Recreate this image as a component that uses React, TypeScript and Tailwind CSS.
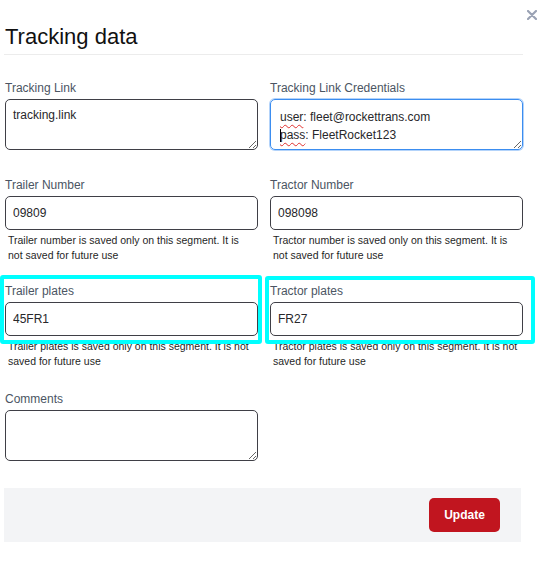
import React from 'react';

const labelCls = 'block text-[12px] leading-[16px] text-[#4b5563] mb-[3px]';
const inputCls =
  'block w-full h-[34px] rounded-[5px] border border-[#3f3f46] bg-white px-[7px] text-[12px] text-[#27272a] outline-none';
const areaCls =
  'block w-full h-[51px] rounded-[5px] border border-[#3f3f46] bg-white px-[7px] pt-[6px] text-[12px] leading-[18px] text-[#27272a] outline-none';
const helpCls = 'mt-[3px] pl-[3px] text-[10.5px] leading-[15px] text-[#1f1f1f] whitespace-nowrap';

function Squiggle({ children }: { children: React.ReactNode }) {
  return (
    <span className="underline decoration-wavy decoration-[#e0312f] decoration-1 underline-offset-[3px]">
      {children}
    </span>
  );
}

export default function App() {
  return (
    <div className="relative w-[543px] h-[574px] bg-white font-['Liberation_Sans',Arial,sans-serif]">
      <button className="absolute top-[9px] right-[5px] w-[12px] h-[12px] flex items-center justify-center">
        <svg width="10" height="10" viewBox="0 0 10 10">
          <path d="M1 1L9 9M9 1L1 9" stroke="#9aa2b4" strokeWidth="2.2" strokeLinecap="round" />
        </svg>
      </button>

      <div className="ml-[4px] w-[519px] pt-[24px]">
        <h2 className="pl-[1px] pb-[4px] text-[22px] leading-[26px] text-[#111] border-b border-[#ececec]">
          Tracking data
        </h2>

        <div className="pl-[1px] mt-[25px] grid grid-cols-2 gap-x-[12px]">
          <div>
            <label className={labelCls}>Tracking Link</label>
            <textarea className={areaCls} defaultValue="tracking.link" />
          </div>
          <div>
            <label className={labelCls}>Tracking Link Credentials</label>
            <div className="h-[51px] resize overflow-auto rounded-[5px] border border-[#3b8df0] shadow-[0_0_0_1px_#b3d3fa] px-[9px] pt-[8px] text-[12px] leading-[18px] text-[#27272a]">
              <div>
                <Squiggle>user</Squiggle>: fleet@rockettrans.com
              </div>
              <div className="relative">
                <span className="absolute left-0 top-[3px] w-px h-[13px] bg-black" />
                <Squiggle>pass</Squiggle>: FleetRocket123
              </div>
            </div>
          </div>
        </div>

        <div className="pl-[1px] mt-[27px] grid grid-cols-2 gap-x-[12px]">
          <div>
            <label className={labelCls}>Trailer Number</label>
            <input className={inputCls} defaultValue="09809" />
            <p className={helpCls}>
              Trailer number is saved only on this segment. It is
              <br />
              not saved for future use
            </p>
          </div>
          <div>
            <label className={labelCls}>Tractor Number</label>
            <input className={inputCls} defaultValue="098098" />
            <p className={helpCls}>
              Tractor number is saved only on this segment. It is
              <br />
              not saved for future use
            </p>
          </div>
        </div>

        <div className="pl-[1px] mt-[20px] grid grid-cols-2 gap-x-[12px]">
          <div>
            <label className={labelCls}>Trailer plates</label>
            <input className={inputCls} defaultValue="45FR1" />
            <p className={helpCls}>
              Trailer plates is saved only on this segment. It is not
              <br />
              saved for future use
            </p>
          </div>
          <div>
            <label className={labelCls}>Tractor plates</label>
            <input className={inputCls} defaultValue="FR27" />
            <p className={helpCls}>
              Tractor plates is saved only on this segment. It is not
              <br />
              saved for future use
            </p>
          </div>
        </div>

        <div className="pl-[1px] mt-[22px] grid grid-cols-2 gap-x-[12px]">
          <div>
            <label className={labelCls}>Comments</label>
            <textarea className={areaCls} />
          </div>
        </div>

        <div className="mt-[27px] w-[517px] h-[54px] bg-[#f3f4f6] flex items-center justify-end pr-[21px]">
          <button className="w-[71px] h-[34px] rounded-[5px] bg-[#c1151f] text-white text-[12px] font-bold">
            Update
          </button>
        </div>
      </div>

      <div className="absolute left-0 top-[275px] w-[262px] h-[69px] border-[4px] border-[#00ffff] rounded-[3px] pointer-events-none" />
      <div className="absolute left-[265px] top-[276px] w-[270px] h-[68px] border-[4px] border-[#00ffff] rounded-[3px] pointer-events-none" />
    </div>
  );
}
